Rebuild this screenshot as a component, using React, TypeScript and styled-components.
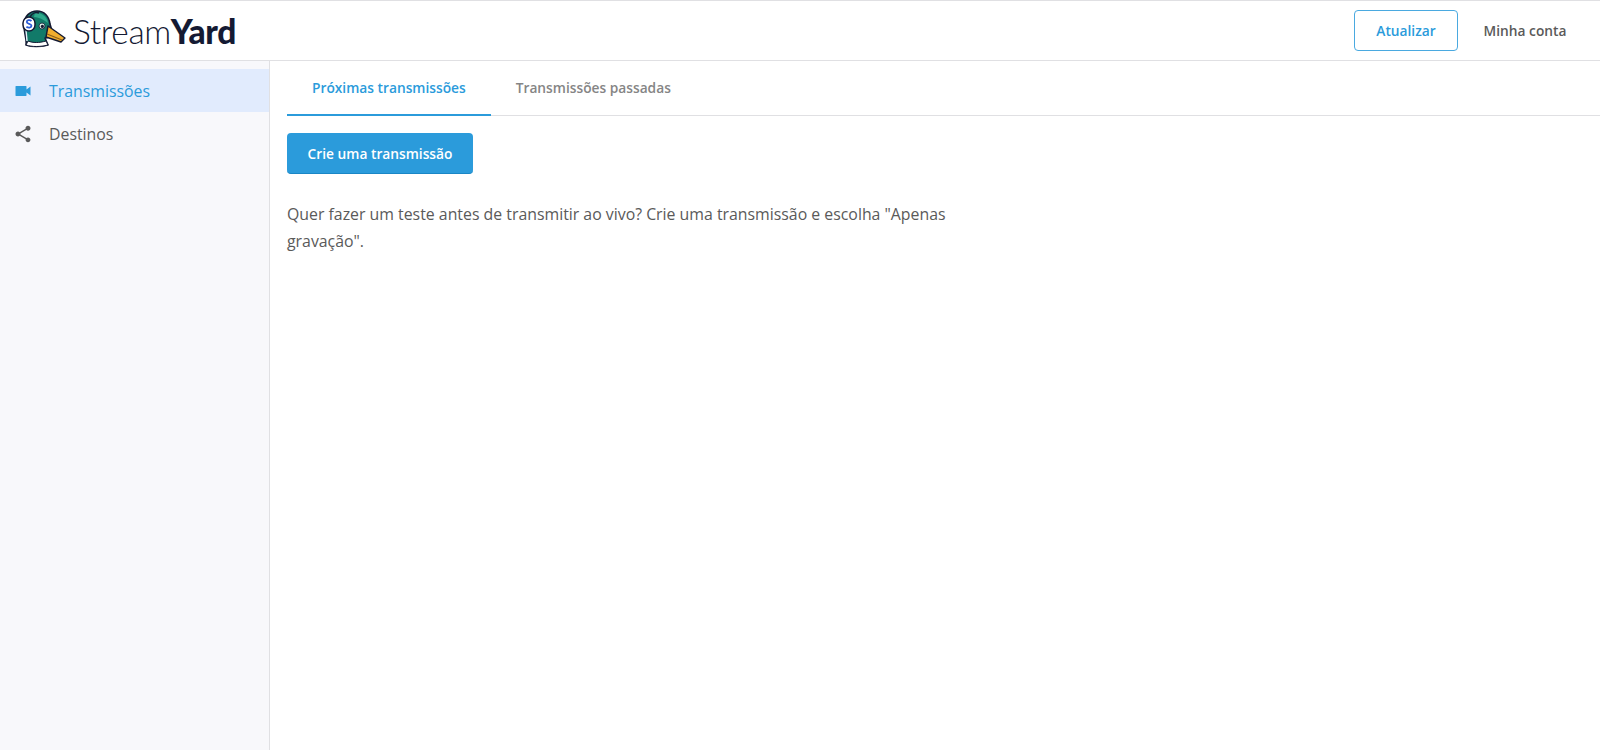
import React from "react";
import styled, { createGlobalStyle } from "styled-components";

const GlobalStyle = createGlobalStyle`
  html, body {
    margin: 0;
    height: 100%;
    background: #fff;
    font-family: "Open Sans", "Liberation Sans", sans-serif;
    color: #5a5a5a;
  }
  * { box-sizing: border-box; }
`;

const Page = styled.div`
  height: 750px;
  display: flex;
  flex-direction: column;
  overflow: hidden;
  border-top: 1px solid #e0e0e3;
`;

const Header = styled.header`
  height: 60px;
  flex-shrink: 0;
  display: flex;
  align-items: center;
  justify-content: space-between;
  padding: 0 25px 0 21px;
  border-bottom: 1px solid #e0e0e3;
`;

const Logo = styled.div`
  display: flex;
  align-items: center;
  gap: 7px;

  svg {
    margin-bottom: 4px;
  }
`;

const LogoText = styled.span`
  font-family: "Lato", sans-serif;
  font-size: 33.5px;
  font-weight: 300;
  letter-spacing: -0.4px;
  color: #141a33;

  b {
    font-weight: 900;
  }
`;

const HeaderActions = styled.div`
  display: flex;
  align-items: center;
  gap: 17px;
`;

const OutlineButton = styled.button`
  width: 104px;
  height: 41px;
  border: 1px solid #4aa9e0;
  border-radius: 4px;
  background: #fff;
  color: #2b9bdb;
  font: 600 13.75px "Open Sans", sans-serif;
`;

const AccountButton = styled.button`
  width: 100px;
  height: 41px;
  border: 0;
  background: none;
  color: #5a5a5a;
  font: 600 13.75px "Open Sans", sans-serif;
`;

const Body = styled.div`
  flex: 1;
  display: flex;
  min-height: 0;
`;

const Sidebar = styled.nav`
  width: 270px;
  flex-shrink: 0;
  padding-top: 8px;
  background: #f8f8fb;
  border-right: 1px solid #e0e0e3;
`;

const NavItem = styled.a<{ $active?: boolean }>`
  height: 43px;
  display: flex;
  align-items: center;
  gap: 16px;
  padding-left: 13px;
  font-size: 15.85px;
  color: ${(p) => (p.$active ? "#2b9bdb" : "#5a5a5a")};
  background: ${(p) => (p.$active ? "#e1ebfd" : "transparent")};

  svg {
    width: 20px;
    height: 20px;
    flex-shrink: 0;
    fill: currentColor;
  }
`;

const Main = styled.main`
  flex: 1;
  padding: 0 17px;
`;

const Tabs = styled.div`
  display: flex;
  height: 55px;
  margin-right: -17px;
  border-bottom: 1px solid #e0e0e3;
`;

const Tab = styled.div<{ $active?: boolean }>`
  height: 55px;
  padding: 0 25px 1px;
  display: flex;
  align-items: center;
  font-size: 13.75px;
  font-weight: 600;
  color: ${(p) => (p.$active ? "#2b9bdb" : "#858585")};
  border-bottom: 2px solid ${(p) => (p.$active ? "#2b9bdb" : "transparent")};
`;

const PrimaryButton = styled.button`
  display: block;
  width: 186px;
  height: 41px;
  margin-top: 17px;
  border: 0;
  border-bottom: 1px solid #1a86c5;
  border-radius: 4px;
  background: #2b9bdb;
  color: #fff;
  font: 600 13.75px "Open Sans", sans-serif;
`;

const Hint = styled.p`
  width: 690px;
  margin: 27px 0 0;
  font-size: 15.85px;
  line-height: 27.2px;
  color: #5a5a5a;
`;

function DuckLogo() {
  return (
    <svg width="45" height="38" viewBox="0 0 45 38">
      {/* head */}
      <path d="M5 35 C6 29 3 24 3 15 C3 6 9 1 16 1 C23 1 28 6 29 14 L31 21 L28 27 C26 28 25 28 24 28 L27 35 C19 37 11 37 5 35 Z" fill="#117a69" stroke="#141a33" strokeWidth="1.6" strokeLinejoin="round" />
      <path d="M14 2.5 C20 2.5 26 6 27 13 C22 9 17 7 13 7 Z" fill="#2fa98c" />
      {/* bill */}
      <path d="M27 16 L44 28 L40 32 L25 27 Z" fill="#f0ae2e" stroke="#141a33" strokeWidth="1.4" strokeLinejoin="round" />
      <path d="M26 24 L41 30" fill="none" stroke="#8a5f18" strokeWidth="1.2" />
      {/* collar */}
      <path d="M7 31 C12 33 18 33 25 31 L27 35 C19 37 11 37 5 35 Z" fill="#ffffff" stroke="#141a33" strokeWidth="1" />
      {/* eye */}
      <circle cx="21" cy="16" r="3" fill="#d8efe5" stroke="#141a33" strokeWidth="0.8" />
      <circle cx="21.4" cy="16.4" r="1.6" fill="#141a33" />
      {/* headphone */}
      <path d="M9 7 C11 3 15 2 18 3" fill="none" stroke="#141a33" strokeWidth="1.6" />
      <path d="M5 20 L6 31" fill="none" stroke="#e8eefb" strokeWidth="1.4" />
      <rect x="2" y="7" width="12" height="14" rx="6" fill="#ffffff" stroke="#141a33" strokeWidth="1.5" />
      <path d="M10.5 11 C9 9.7 5.8 9.8 5.8 12 C5.8 14.4 10.5 13.4 10.5 15.8 C10.5 18 7.2 18 5.4 16.8" fill="none" stroke="#2a5bd7" strokeWidth="1.8" />
    </svg>
  );
}

function CameraIcon() {
  return (
    <svg viewBox="0 0 20 20">
      <path d="M3 5h10c.3 0 .5.2.5.5v3l4-3v9l-4-3v3c0 .3-.2.5-.5.5H3c-.3 0-.5-.2-.5-.5v-9c0-.3.2-.5.5-.5z" />
    </svg>
  );
}

function ShareIcon() {
  return (
    <svg viewBox="0 0 24 24">
      <path d="M18 16.08c-.76 0-1.44.3-1.96.77L8.91 12.7c.05-.23.09-.46.09-.7s-.04-.47-.09-.7l7.05-4.11c.54.5 1.25.81 2.04.81 1.66 0 3-1.34 3-3s-1.34-3-3-3-3 1.34-3 3c0 .24.04.47.09.7L8.04 9.81C7.5 9.31 6.79 9 6 9c-1.66 0-3 1.34-3 3s1.34 3 3 3c.79 0 1.5-.31 2.04-.81l7.12 4.16c-.05.21-.08.43-.08.65 0 1.61 1.31 2.92 2.92 2.92s2.92-1.31 2.92-2.92-1.31-2.92-2.92-2.92z" />
    </svg>
  );
}

export default function App() {
  return (
    <Page>
      <GlobalStyle />
      <Header>
        <Logo>
          <DuckLogo />
          <LogoText>
            Stream<b>Yard</b>
          </LogoText>
        </Logo>
        <HeaderActions>
          <OutlineButton>Atualizar</OutlineButton>
          <AccountButton>Minha conta</AccountButton>
        </HeaderActions>
      </Header>
      <Body>
        <Sidebar>
          <NavItem $active>
            <CameraIcon />
            Transmissões
          </NavItem>
          <NavItem>
            <ShareIcon />
            Destinos
          </NavItem>
        </Sidebar>
        <Main>
          <Tabs>
            <Tab $active>Próximas transmissões</Tab>
            <Tab>Transmissões passadas</Tab>
          </Tabs>
          <PrimaryButton>Crie uma transmissão</PrimaryButton>
          <Hint>
            Quer fazer um teste antes de transmitir ao vivo? Crie uma transmissão e escolha "Apenas gravação".
          </Hint>
        </Main>
      </Body>
    </Page>
  );
}
